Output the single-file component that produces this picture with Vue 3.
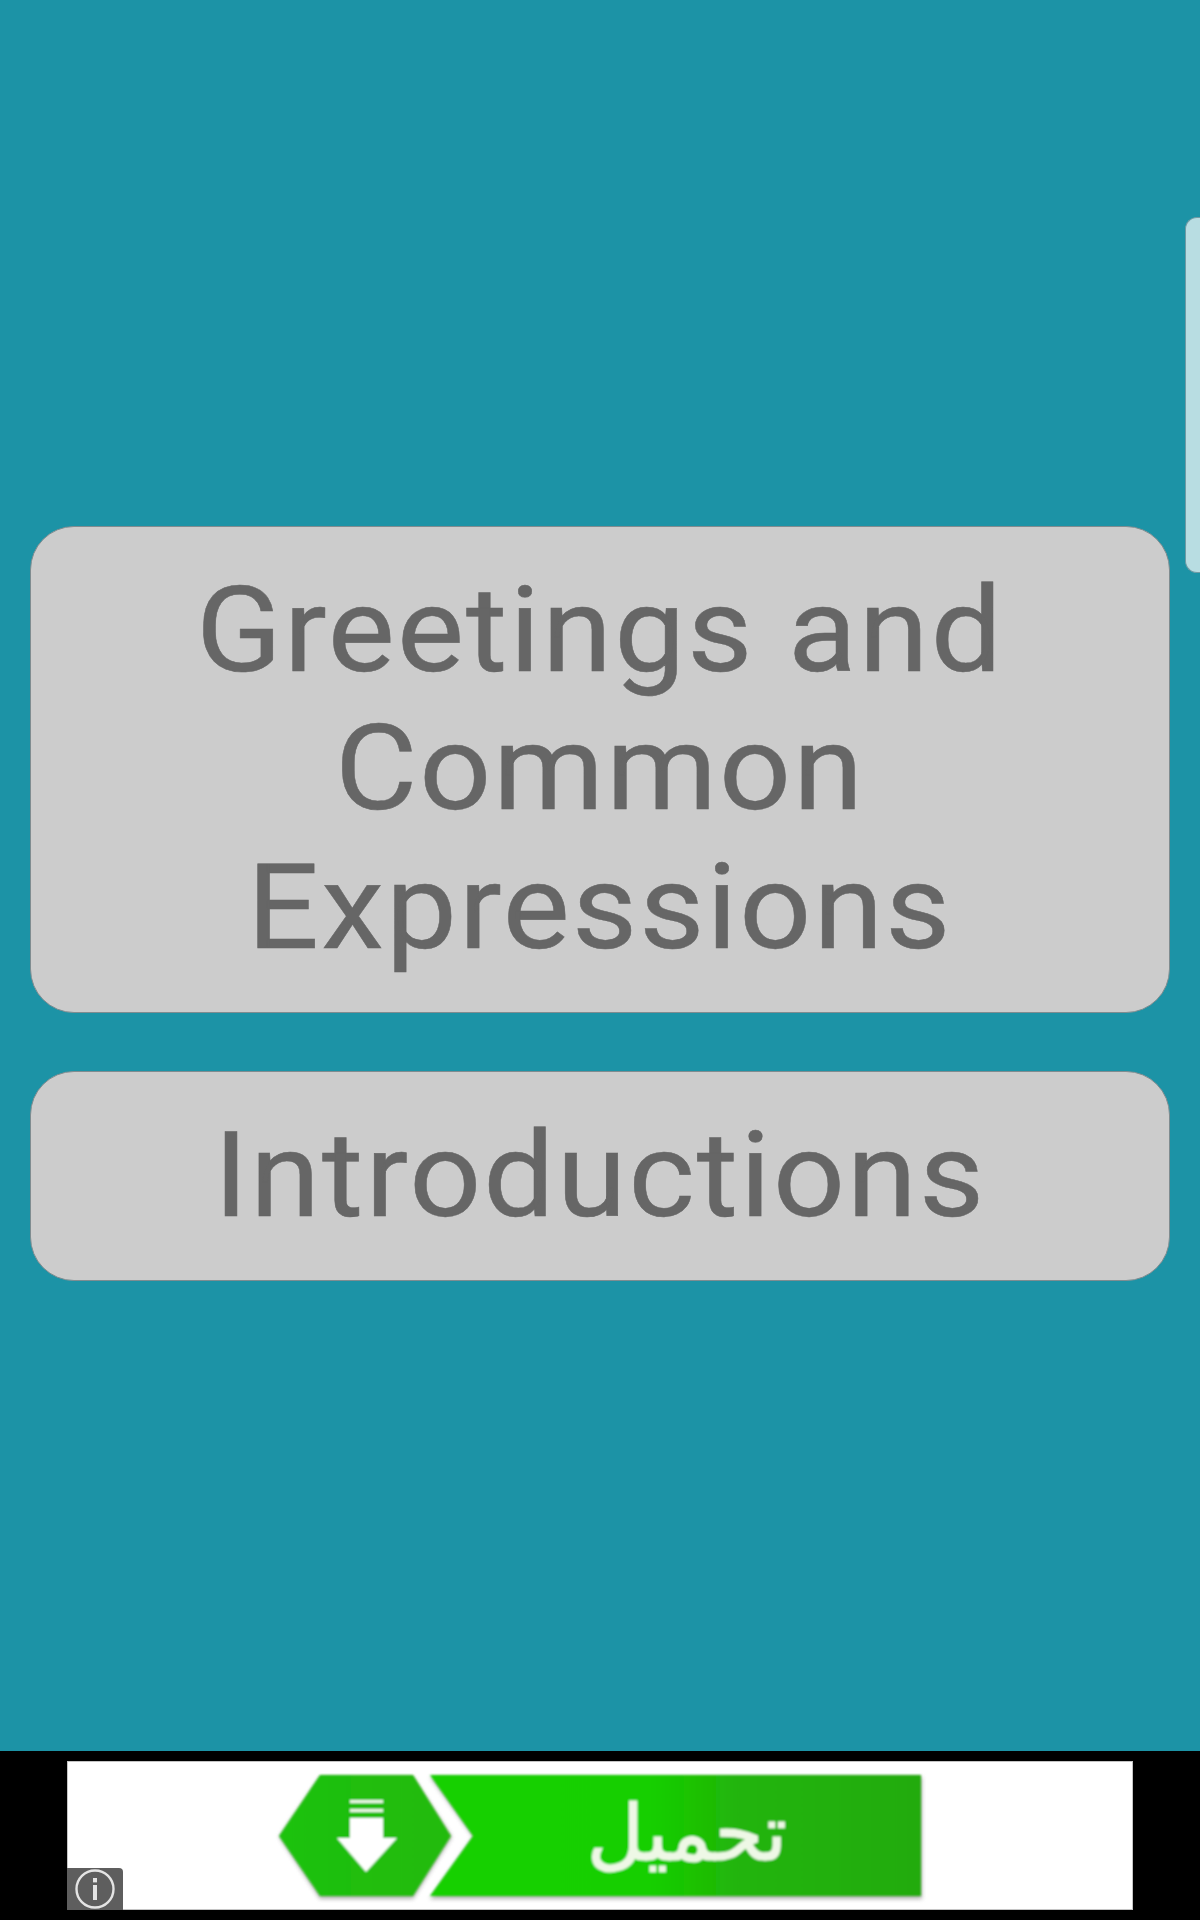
<script setup>
const topics = ['Greetings and Common Expressions', 'Introductions']
</script>

<template>
  <div class="page">
    <main class="topics">
      <button v-for="topic in topics" :key="topic" class="topic">
        <span class="topic-label">{{ topic }}</span>
      </button>
      <div class="scroll-handle"></div>
    </main>
    <footer class="ad-bar">
      <div class="ad">
        <svg class="banner" viewBox="1 0 1066 149" width="1066" height="149">
          <defs>
            <linearGradient id="cta" x1="0" x2="1" y1="0" y2="0">
              <stop offset="0" stop-color="#12d000" />
              <stop offset="0.45" stop-color="#14cf02" />
              <stop offset="0.62" stop-color="#22b508" />
              <stop offset="1" stop-color="#21ab07" />
            </linearGradient>
            <linearGradient id="hex" x1="0" x2="1" y1="0" y2="0">
              <stop offset="0" stop-color="#1cc20c" />
              <stop offset="1" stop-color="#25ba0e" />
            </linearGradient>
            <filter id="soft" x="-5%" y="-10%" width="110%" height="120%">
              <feGaussianBlur stdDeviation="1" />
            </filter>
            <filter id="shade" x="-5%" y="-10%" width="110%" height="125%">
              <feGaussianBlur stdDeviation="2.2" />
            </filter>
          </defs>
          <g filter="url(#shade)" fill="#8a8a8a" opacity="0.65">
            <path d="M254 16 L347 16 L386 76 L347 138 L254 138 L213 76 Z" />
            <path d="M364 16 L856 16 L856 138 L364 138 L407 76 Z" />
          </g>
          <g filter="url(#soft)">
            <path d="M254 14 L347 14 L385 75 L347 135 L254 135 L213 75 Z" fill="url(#hex)" />
            <path d="M364 14 L855 14 L855 135 L364 135 L407 75 Z" fill="url(#cta)" />
            <rect x="284" y="39" width="33" height="3" fill="#ecf9e6" />
            <rect x="284" y="48" width="33" height="3" fill="#ecf9e6" />
            <path d="M284 57 L317 57 L317 77 L331 77 L300 111 L271 77 L284 77 Z" fill="#fff" />
            <text class="cta-label" x="621" y="99" text-anchor="middle">تحميل</text>
          </g>
        </svg>
        <div class="info">
          <svg viewBox="0 0 56 42" width="56" height="42">
            <circle cx="28" cy="21" r="18.5" fill="none" stroke="#e4e4e4" stroke-width="2.4" />
            <rect x="26" y="17" width="4" height="15" fill="#e4e4e4" />
            <rect x="26" y="10" width="4" height="4.4" fill="#e4e4e4" />
          </svg>
        </div>
      </div>
    </footer>
  </div>
</template>

<style scoped>
.page {
  width: 1200px;
  height: 1920px;
  display: flex;
  flex-direction: column;
  background: #1c93a6;
  font-family: Roboto, "Liberation Sans", sans-serif;
  overflow: hidden;
}

.topics {
  position: relative;
  flex: 1;
  display: flex;
  flex-direction: column;
  gap: 58px;
  padding: 526px 30px 0;
  box-sizing: border-box;
}

.topic {
  padding: 35px 30px;
  border: 1px solid #7f8c90;
  border-radius: 44px;
  background: #cccccc;
  color: #666666;
  font: 400 118px/138.33px Roboto, "Liberation Sans", sans-serif;
  text-align: center;
}

.topic-label {
  display: block;
  letter-spacing: 2px;
  -webkit-text-stroke: 0.5px #666666;
  transform: scaleX(1.07);
}

.scroll-handle {
  position: absolute;
  top: 217px;
  right: 0;
  width: 15px;
  height: 356px;
  box-sizing: border-box;
  border: 1px solid #6f9aa4;
  border-right: 0;
  border-radius: 12px 0 0 12px;
  background: #b8dde2;
}

.ad-bar {
  height: 169px;
  box-sizing: border-box;
  padding: 10px 67px;
  background: #000000;
}

.ad {
  position: relative;
  height: 149px;
  background: #ffffff;
}

.ad::after {
  content: "";
  position: absolute;
  inset: 0;
  box-shadow: inset 0 0 0 1px #c4c4c4;
  pointer-events: none;
}

.banner {
  display: block;
}

.cta-label {
  font-family: "DejaVu Sans", sans-serif;
  font-size: 78px;
  fill: #eef8e6;
  stroke: #eef8e6;
  stroke-width: 1.2px;
}

.info {
  position: absolute;
  z-index: 1;
  left: 0;
  bottom: 0;
  width: 56px;
  height: 42px;
  border-radius: 0 4px 0 0;
  background: #5e5e5e;
}

.info svg {
  display: block;
}
</style>
